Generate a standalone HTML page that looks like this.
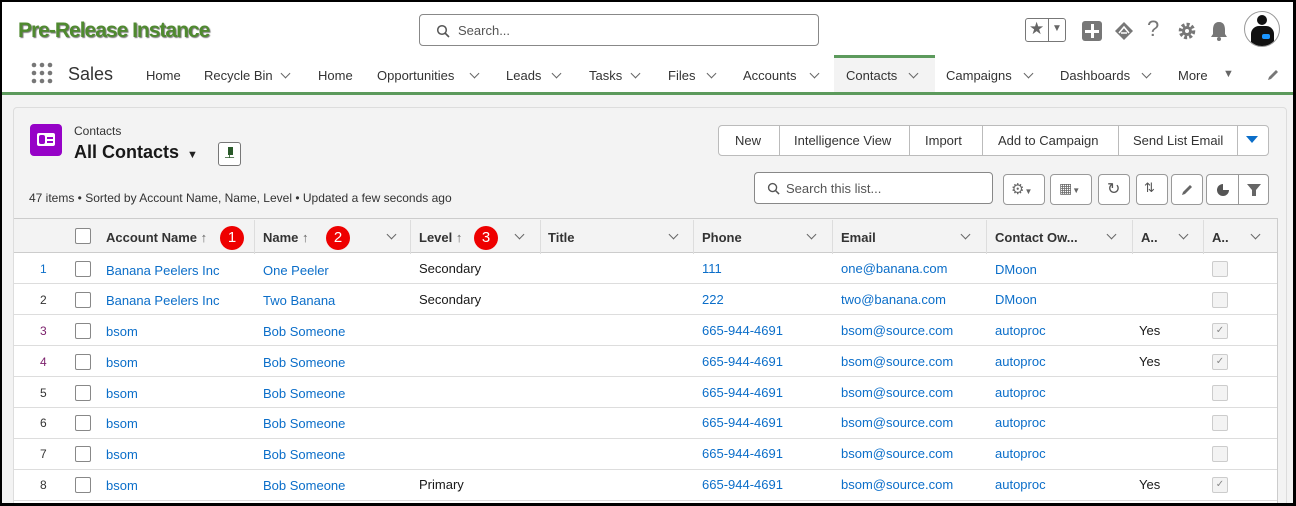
<!DOCTYPE html>
<html><head><meta charset="utf-8"><style>
*{box-sizing:border-box;margin:0;padding:0}
body{width:1296px;height:506px;overflow:hidden;background:#000;font-family:"Liberation Sans",sans-serif;font-size:13px;color:#181818;position:relative}
.a{position:absolute;white-space:nowrap}
#frame{position:absolute;left:2px;top:2px;width:1291px;height:501px;background:#f3f3f3;overflow:hidden}
.lnk{color:#0b6ec9}
.chev{position:absolute;width:7px;height:7px;border-right:1.3px solid #666;border-bottom:1.3px solid #666;transform:rotate(45deg)}
.nav{font-size:13px;color:#333;top:66px}
.btn{position:absolute;border:1px solid #bbb;background:#fff;border-radius:4px}
.th{font-weight:bold;font-size:13px;color:#333;top:228px}
.sep{position:absolute;top:218px;width:1px;height:34px;background:#ddd}
.cb{position:absolute;width:16px;height:16px;border:1px solid #888;border-radius:2px;background:#fff}
.cb2{position:absolute;width:16px;height:16px;border:1px solid #ccc;border-radius:2px;background:#f3f3f3;font-size:10px;color:#888;text-align:center;line-height:14px}
.red{position:absolute;width:24px;height:24px;border-radius:12px;background:#e00;color:#fff;font-size:15px;text-align:center;line-height:24px;top:224px}
</style></head><body>
<div id="frame">
<div class="a" style="left:0;top:0;width:1291px;height:90px;background:#fff"></div>
<div class="a" style="left:16px;top:17px;font-size:21px;font-weight:bold;color:#4f8a2f;letter-spacing:-1px;text-shadow:1px 1px 1px #777">Pre-Release Instance</div>
<div class="a" style="left:417px;top:12px;width:400px;height:32px;border:1px solid #888;border-radius:4px;background:#fff"></div>
<svg class="a" style="left:434px;top:22px" width="14" height="14" viewBox="0 0 14 14"><circle cx="6" cy="6" r="4.3" fill="none" stroke="#555" stroke-width="1.5"/><line x1="9" y1="9" x2="13" y2="13" stroke="#555" stroke-width="1.6"/></svg>
<div class="a" style="left:456px;top:21px;color:#555;font-size:13px">Search...</div>
<div class="a" style="left:1023px;top:16px;width:41px;height:24px;border:1px solid #777;border-radius:3px;background:#fff"></div>
<div class="a" style="left:1046px;top:17px;width:1px;height:22px;background:#777"></div>
<div class="a" style="left:1027px;top:17px;font-size:17px;color:#666">★</div>
<div class="a" style="left:1050px;top:21px;font-size:10px;color:#666">▼</div>
<div class="a" style="left:1080px;top:19px;width:20px;height:20px;background:#777;border-radius:3px"></div>
<div class="a" style="left:1089px;top:22px;width:2.5px;height:14px;background:#fff"></div>
<div class="a" style="left:1083px;top:28px;width:14px;height:2.5px;background:#fff"></div>
<svg class="a" style="left:1111px;top:18px" width="22" height="22" viewBox="0 0 22 22"><path d="M11 2 L20 11 L11 20 L2 11Z" fill="#777"/><path d="M6 13 L11 7 L16 13 M8 13 L14 13" stroke="#fff" stroke-width="1.6" fill="none"/></svg>
<div class="a" style="left:1145px;top:14px;font-size:22px;color:#777">?</div>
<svg class="a" style="left:1175px;top:19px" width="20" height="20" viewBox="0 0 20 20"><circle cx="10" cy="10" r="6.5" fill="none" stroke="#777" stroke-width="3.5" stroke-dasharray="3 2"/><circle cx="10" cy="10" r="5" fill="#777"/><circle cx="10" cy="10" r="2" fill="#fff"/></svg>
<svg class="a" style="left:1207px;top:18px" width="20" height="22" viewBox="0 0 20 22"><path d="M10 2 C5 2 4 6 4 10 L4 14 L2 17 L18 17 L16 14 L16 10 C16 6 15 2 10 2Z" fill="#777"/><circle cx="10" cy="19" r="2" fill="#777"/></svg>
<div class="a" style="left:1242px;top:9px;width:36px;height:36px;border-radius:18px;border:1px solid #999;background:#fff;overflow:hidden">
<div class="a" style="left:12px;top:3px;width:10px;height:10px;border-radius:5px;background:#111"></div>
<div class="a" style="left:6px;top:14px;width:23px;height:20px;border-radius:8px 8px 0 0;background:#111"></div>
<div class="a" style="left:17px;top:22px;width:8px;height:5px;background:#1b96ff;border-radius:2px"></div>
</div>
<svg class="a" style="left:29px;top:60px" width="22" height="22" viewBox="0 0 22 22" fill="#777"><circle cx="3" cy="3" r="2.3"/><circle cx="11" cy="3" r="2.3"/><circle cx="19" cy="3" r="2.3"/><circle cx="3" cy="11" r="2.3"/><circle cx="11" cy="11" r="2.3"/><circle cx="19" cy="11" r="2.3"/><circle cx="3" cy="19" r="2.3"/><circle cx="11" cy="19" r="2.3"/><circle cx="19" cy="19" r="2.3"/></svg>
<div class="a" style="left:66px;top:62px;font-size:18px;color:#333">Sales</div>
<div class="a" style="left:832px;top:53px;width:101px;height:37px;background:#f3f3f3;border-top:3px solid #5c9a5c"></div>
<div class="a nav" style="left:144px">Home</div>
<div class="a nav" style="left:202px">Recycle Bin</div><div class="chev" style="left:280px;top:68px"></div>
<div class="a nav" style="left:316px">Home</div>
<div class="a nav" style="left:375px">Opportunities</div><div class="chev" style="left:469px;top:68px"></div>
<div class="a nav" style="left:504px">Leads</div><div class="chev" style="left:551px;top:68px"></div>
<div class="a nav" style="left:587px">Tasks</div><div class="chev" style="left:630px;top:68px"></div>
<div class="a nav" style="left:666px">Files</div><div class="chev" style="left:706px;top:68px"></div>
<div class="a nav" style="left:741px">Accounts</div><div class="chev" style="left:809px;top:68px"></div>
<div class="a nav" style="left:844px">Contacts</div><div class="chev" style="left:908px;top:68px"></div>
<div class="a nav" style="left:944px">Campaigns</div><div class="chev" style="left:1023px;top:68px"></div>
<div class="a nav" style="left:1058px">Dashboards</div><div class="chev" style="left:1141px;top:68px"></div>
<div class="a nav" style="left:1176px">More</div>
<div class="a" style="left:1221px;top:66px;font-size:11px;color:#666">▼</div>
<svg class="a" style="left:1264px;top:66px" width="14" height="14" viewBox="0 0 14 14"><path d="M2 12 L3 9 L10 2 L12 4 L5 11Z" fill="#777"/></svg>
<div class="a" style="left:0;top:90px;width:1291px;height:3px;background:#5c9a5c"></div>
<div class="a" style="left:11px;top:105px;width:1274px;height:410px;border:1px solid #ddd;border-radius:4px;background:#f3f3f3"></div>
<div class="a" style="left:28px;top:122px;width:32px;height:32px;border-radius:4px;background:#9602c7"></div>
<div class="a" style="left:35px;top:131px;width:18px;height:13px;background:#fff;border-radius:2px"></div>
<div class="a" style="left:37px;top:133px;width:6px;height:9px;background:#9602c7;border-radius:2px"></div>
<div class="a" style="left:45px;top:135px;width:6px;height:2px;background:#9602c7"></div>
<div class="a" style="left:45px;top:139px;width:6px;height:2px;background:#9602c7"></div>
<div class="a" style="left:72px;top:122px;font-size:12px;color:#333">Contacts</div>
<div class="a" style="left:72px;top:140px;font-size:18px;font-weight:bold">All Contacts</div>
<div class="a" style="left:185px;top:147px;font-size:11px;color:#222">▼</div>
<div class="a" style="left:216px;top:140px;width:23px;height:24px;border:1px solid #777;border-radius:3px;background:#fff;text-align:center;font-size:13px;color:#2a5a2a;line-height:22px">⊥</div>
<div class="a" style="left:226px;top:145px;width:5px;height:8px;background:#2a5a2a"></div>
<div class="a" style="left:27px;top:189px;font-size:12px;color:#333">47 items • Sorted by Account Name, Name, Level • Updated a few seconds ago</div>
<div class="btn" style="left:716px;top:123px;width:551px;height:31px"></div>
<div class="a" style="left:777px;top:124px;width:1px;height:29px;background:#bbb"></div>
<div class="a" style="left:907px;top:124px;width:1px;height:29px;background:#bbb"></div>
<div class="a" style="left:980px;top:124px;width:1px;height:29px;background:#bbb"></div>
<div class="a" style="left:1116px;top:124px;width:1px;height:29px;background:#bbb"></div>
<div class="a" style="left:1235px;top:124px;width:1px;height:29px;background:#bbb"></div>
<div class="a" style="left:733px;top:131px;color:#333">New</div>
<div class="a" style="left:792px;top:131px;color:#333">Intelligence View</div>
<div class="a" style="left:923px;top:131px;color:#333">Import</div>
<div class="a" style="left:996px;top:131px;color:#333">Add to Campaign</div>
<div class="a" style="left:1131px;top:131px;color:#333">Send List Email</div>
<div class="a" style="left:1244px;top:134px;width:0;height:0;border-left:6px solid transparent;border-right:6px solid transparent;border-top:7px solid #0b6ec9"></div>
<div class="btn" style="left:752px;top:170px;width:239px;height:32px;border-color:#888"></div>
<svg class="a" style="left:765px;top:180px" width="13" height="13" viewBox="0 0 14 14"><circle cx="6" cy="6" r="4.3" fill="none" stroke="#555" stroke-width="1.5"/><line x1="9" y1="9" x2="13" y2="13" stroke="#555" stroke-width="1.6"/></svg>
<div class="a" style="left:784px;top:179px;color:#555">Search this list...</div>
<div class="btn" style="left:1001px;top:172px;width:42px;height:31px;border-color:#999"></div>
<div class="a" style="left:1009px;top:178px;font-size:15px;color:#666">⚙<span style="font-size:8px">▼</span></div>
<div class="btn" style="left:1048px;top:172px;width:42px;height:31px;border-color:#999"></div>
<div class="a" style="left:1057px;top:178px;font-size:14px;color:#666">▦<span style="font-size:8px">▼</span></div>
<div class="btn" style="left:1096px;top:172px;width:32px;height:31px;border-color:#999"></div>
<div class="a" style="left:1105px;top:177px;font-size:16px;color:#555">↻</div>
<div class="btn" style="left:1134px;top:172px;width:32px;height:31px;border-color:#999"></div>
<div class="a" style="left:1142px;top:178px;font-size:13px;color:#555">⇅</div>
<div class="btn" style="left:1169px;top:172px;width:32px;height:31px;border-color:#999"></div>
<svg class="a" style="left:1178px;top:181px" width="14" height="14" viewBox="0 0 14 14"><path d="M2 12 L3 9 L10 2 L12 4 L5 11Z" fill="#666"/></svg>
<div class="btn" style="left:1204px;top:172px;width:63px;height:31px;border-color:#999"></div>
<div class="a" style="left:1236px;top:173px;width:1px;height:29px;background:#999"></div>
<svg class="a" style="left:1214px;top:181px" width="14" height="14" viewBox="0 0 14 14"><circle cx="7" cy="7" r="6" fill="#555"/><path d="M7 7 L7 0 A7 7 0 0 1 14 7Z" fill="#fff"/></svg>
<svg class="a" style="left:1245px;top:181px" width="14" height="14" viewBox="0 0 14 14"><path d="M0 1 L14 1 L9 7 L9 13 L5 13 L5 7Z" fill="#666"/></svg>
<div class="a" style="left:12px;top:216px;width:1263px;height:300px;background:#fff"></div>
<div class="a" style="left:12px;top:216px;width:1263px;height:35px;background:#f3f3f3;border-top:1px solid #ccc;border-bottom:1px solid #ccc"></div>
<div class="a" style="left:1275px;top:216px;width:1px;height:300px;background:#ccc"></div>
<div class="cb" style="left:73px;top:226px"></div>
<div class="a th" style="left:104px">Account Name <span style="font-weight:normal;color:#666">↑</span></div>
<div class="red" style="left:218px">1</div>
<div class="sep" style="left:252px"></div>
<div class="a th" style="left:261px">Name <span style="font-weight:normal;color:#666">↑</span></div>
<div class="red" style="left:324px">2</div><div class="chev" style="left:386px;top:229px"></div>
<div class="sep" style="left:408px"></div>
<div class="a th" style="left:417px">Level <span style="font-weight:normal;color:#666">↑</span></div>
<div class="red" style="left:472px">3</div><div class="chev" style="left:514px;top:229px"></div>
<div class="sep" style="left:538px"></div>
<div class="a th" style="left:546px">Title</div><div class="chev" style="left:668px;top:229px"></div>
<div class="sep" style="left:691px"></div>
<div class="a th" style="left:700px">Phone</div><div class="chev" style="left:806px;top:229px"></div>
<div class="sep" style="left:830px"></div>
<div class="a th" style="left:839px">Email</div><div class="chev" style="left:960px;top:229px"></div>
<div class="sep" style="left:984px"></div>
<div class="a th" style="left:993px">Contact Ow...</div><div class="chev" style="left:1106px;top:229px"></div>
<div class="sep" style="left:1130px"></div>
<div class="a th" style="left:1139px">A..</div><div class="chev" style="left:1178px;top:229px"></div>
<div class="sep" style="left:1201px"></div>
<div class="a th" style="left:1210px">A..</div><div class="chev" style="left:1250px;top:229px"></div>
<div style="position:absolute;left:0;top:250px;width:1275px">
<div style="position:absolute;left:12px;top:31px;width:1263px;height:1px;background:#ddd"></div>
<div style="position:absolute;left:12px;top:62px;width:1263px;height:1px;background:#ddd"></div>
<div style="position:absolute;left:12px;top:93px;width:1263px;height:1px;background:#ddd"></div>
<div style="position:absolute;left:12px;top:124px;width:1263px;height:1px;background:#ddd"></div>
<div style="position:absolute;left:12px;top:155px;width:1263px;height:1px;background:#ddd"></div>
<div style="position:absolute;left:12px;top:186px;width:1263px;height:1px;background:#ddd"></div>
<div style="position:absolute;left:12px;top:217px;width:1263px;height:1px;background:#ddd"></div>
<div style="position:absolute;left:12px;top:248px;width:1263px;height:1px;background:#ddd"></div>
</div>
<div class="a lnk" style="left:38px;top:260px;font-size:12px">1</div><div class="cb" style="left:73px;top:259px"></div>
<div class="a lnk" style="left:104px;top:261px">Banana Peelers Inc</div><div class="a lnk" style="left:261px;top:261px">One Peeler</div>
<div class="a" style="left:417px;top:259px">Secondary</div><div class="a lnk" style="left:700px;top:259px">111</div>
<div class="a lnk" style="left:839px;top:259px">one@banana.com</div><div class="a lnk" style="left:993px;top:260px">DMoon</div>
<div class="cb2" style="left:1210px;top:259px"></div>
<div class="a" style="left:38px;top:291px;font-size:12px;color:#333">2</div><div class="cb" style="left:73px;top:290px"></div>
<div class="a lnk" style="left:104px;top:291px">Banana Peelers Inc</div><div class="a lnk" style="left:261px;top:291px">Two Banana</div>
<div class="a" style="left:417px;top:290px">Secondary</div><div class="a lnk" style="left:700px;top:290px">222</div>
<div class="a lnk" style="left:839px;top:290px">two@banana.com</div><div class="a lnk" style="left:993px;top:290px">DMoon</div>
<div class="cb2" style="left:1210px;top:290px"></div>
<div class="a" style="left:38px;top:322px;font-size:12px;color:#7a1e6a">3</div><div class="cb" style="left:73px;top:321px"></div>
<div class="a lnk" style="left:104px;top:322px">bsom</div><div class="a lnk" style="left:261px;top:322px">Bob Someone</div>
<div class="a lnk" style="left:700px;top:321px">665-944-4691</div><div class="a lnk" style="left:839px;top:321px">bsom@source.com</div>
<div class="a lnk" style="left:993px;top:321px">autoproc</div><div class="a" style="left:1137px;top:321px">Yes</div><div class="cb2" style="left:1210px;top:321px">✓</div>
<div class="a" style="left:38px;top:353px;font-size:12px;color:#7a1e6a">4</div><div class="cb" style="left:73px;top:352px"></div>
<div class="a lnk" style="left:104px;top:353px">bsom</div><div class="a lnk" style="left:261px;top:353px">Bob Someone</div>
<div class="a lnk" style="left:700px;top:352px">665-944-4691</div><div class="a lnk" style="left:839px;top:352px">bsom@source.com</div>
<div class="a lnk" style="left:993px;top:352px">autoproc</div><div class="a" style="left:1137px;top:352px">Yes</div><div class="cb2" style="left:1210px;top:352px">✓</div>
<div class="a" style="left:38px;top:384px;font-size:12px;color:#333">5</div><div class="cb" style="left:73px;top:383px"></div>
<div class="a lnk" style="left:104px;top:384px">bsom</div><div class="a lnk" style="left:261px;top:384px">Bob Someone</div>
<div class="a lnk" style="left:700px;top:383px">665-944-4691</div><div class="a lnk" style="left:839px;top:383px">bsom@source.com</div>
<div class="a lnk" style="left:993px;top:383px">autoproc</div><div class="cb2" style="left:1210px;top:383px"></div>
<div class="a" style="left:38px;top:414px;font-size:12px;color:#333">6</div><div class="cb" style="left:73px;top:413px"></div>
<div class="a lnk" style="left:104px;top:414px">bsom</div><div class="a lnk" style="left:261px;top:414px">Bob Someone</div>
<div class="a lnk" style="left:700px;top:413px">665-944-4691</div><div class="a lnk" style="left:839px;top:413px">bsom@source.com</div>
<div class="a lnk" style="left:993px;top:413px">autoproc</div><div class="cb2" style="left:1210px;top:413px"></div>
<div class="a" style="left:38px;top:445px;font-size:12px;color:#333">7</div><div class="cb" style="left:73px;top:444px"></div>
<div class="a lnk" style="left:104px;top:445px">bsom</div><div class="a lnk" style="left:261px;top:445px">Bob Someone</div>
<div class="a lnk" style="left:700px;top:444px">665-944-4691</div><div class="a lnk" style="left:839px;top:444px">bsom@source.com</div>
<div class="a lnk" style="left:993px;top:444px">autoproc</div><div class="cb2" style="left:1210px;top:444px"></div>
<div class="a" style="left:38px;top:476px;font-size:12px;color:#333">8</div><div class="cb" style="left:73px;top:475px"></div>
<div class="a lnk" style="left:104px;top:476px">bsom</div><div class="a lnk" style="left:261px;top:476px">Bob Someone</div>
<div class="a" style="left:417px;top:475px">Primary</div>
<div class="a lnk" style="left:700px;top:475px">665-944-4691</div><div class="a lnk" style="left:839px;top:475px">bsom@source.com</div>
<div class="a lnk" style="left:993px;top:475px">autoproc</div><div class="a" style="left:1137px;top:475px">Yes</div><div class="cb2" style="left:1210px;top:475px">✓</div>
</div>
</body></html>
